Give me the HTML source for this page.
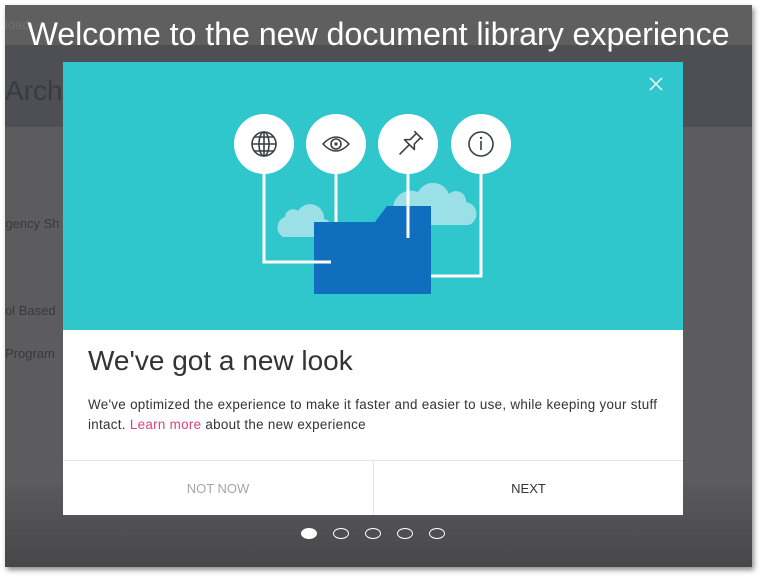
<!DOCTYPE html>
<html><head><meta charset="utf-8"><style>
body{margin:0;width:761px;height:577px;background:#fff;position:relative;overflow:hidden;font-family:"Liberation Sans",sans-serif}
#f{position:absolute;left:5px;top:5px;width:747px;height:562px;background:#5b5a5c;box-shadow:2px 3px 5px rgba(0,0,0,.45);overflow:hidden}
.bg{position:absolute;left:0;width:100%}
.t{position:absolute;color:#3e3e40;font-size:13px;white-space:nowrap}
#h{position:absolute;left:0;top:11px;width:747px;text-align:center;color:#fff;font-size:32.3px;white-space:nowrap;letter-spacing:-0.1px}
#m{position:absolute;left:63px;top:62px;width:620px;height:453px;background:#fff}
#teal{position:absolute;left:0;top:0;width:620px;height:268px;background:#2fc6cc}
.dot{position:absolute;top:528px;width:14px;height:9px;border:1px solid #fff;border-radius:50%}
</style></head><body>
<div id="f">
<div class="bg" style="top:0;height:40px;background:#5f5f5f"></div>
<div class="bg" style="top:40px;height:82px;background:#4e4e55"></div>
<div class="bg" style="top:122px;height:380px;background:#5c5b5d"></div>
<div class="bg" style="top:480px;height:82px;background:linear-gradient(#5a595b,#474649)"></div>
<div class="t" style="left:0;top:12px;color:#707070">load</div>
<div class="t" style="left:0;top:70px;font-size:28px;color:#3a3a40">Archiv</div>
<div class="t" style="left:-4px;top:211px;color:#3a3a3a">rgency Sh</div>
<div class="t" style="left:0;top:298px;color:#3a3a3a">ol Based</div>
<div class="t" style="left:0;top:341px;color:#3a3a3a">Program</div>
<div id="h">Welcome to the new document library experience</div>
</div>
<div id="m">
<div id="teal">
<svg width="620" height="268" viewBox="63 62 620 268" style="position:absolute;left:0;top:0">
<g fill="#9be0e6">
<path d="M283 237h45a10 10 0 0 0-4-18a14 14 0 0 0-26-8a8 8 0 0 0-13 6a11 11 0 0 0-2 20z"/>
<path d="M404 225h65a12 12 0 0 0-3-23a10 10 0 0 0-17-8a17 17 0 0 0-31-2a13 13 0 0 0-14 33z"/>
</g>
<g stroke="#fff" stroke-width="3" fill="none">
<path d="M264 160v102h67"/><path d="M336 160v63"/><path d="M481 160v116h-50"/>
</g>
<path fill="#0f6ebd" d="M314 222h61l12-16h44v88h-117z"/>
<path d="M408 160v78" stroke="#fff" stroke-width="3"/>
<path d="M264 262h67" stroke="#fff" stroke-width="3"/>
<g fill="#fff"><circle cx="264" cy="144" r="30"/><circle cx="336" cy="144" r="30"/><circle cx="408" cy="144" r="30"/><circle cx="481" cy="144" r="30"/></g>
<g stroke="#3a3f44" stroke-width="1.6" fill="none" stroke-linejoin="round">
<circle cx="264" cy="144" r="12"/><ellipse cx="264" cy="144" rx="5" ry="12"/><path d="M252 144h24M254 137h20M254 151h20M264 132v24"/>
<path d="M323 144q13-14 26 0q-13 14-26 0z"/><circle cx="336" cy="144" r="5"/>
<g transform="rotate(45 408 146)"><path d="M402 131h12M405 131v9l-4 4h14l-4-4v-9M408 144v14"/></g>
<circle cx="481" cy="144" r="12"/><path d="M481 141v9"/>
</g>
<circle cx="336" cy="144" r="1.6" fill="#3a3f44"/><circle cx="481" cy="138" r="1.2" fill="#3a3f44"/>
<path d="M650 78l12 12M662 78l-12 12" stroke="#fff" stroke-width="1.4"/>
</svg>
</div>
<div style="position:absolute;left:25px;top:283px;font-size:28px;color:#333">We've got a new look</div>
<div style="position:absolute;left:25px;top:333px;width:580px;font-size:13.4px;letter-spacing:0.3px;line-height:19.5px;color:#333">We've optimized the experience to make it faster and easier to use, while keeping your stuff intact. <span style="color:#d9447b">Learn more</span> about the new experience</div>
<div style="position:absolute;left:0;top:398px;width:620px;border-top:1px solid #e6e6e6"></div>
<div style="position:absolute;left:310px;top:399px;height:54px;border-left:1px solid #e6e6e6"></div>
<div style="position:absolute;left:0;top:419px;width:310px;text-align:center;font-size:13px;color:#a6a6a6">NOT NOW</div>
<div style="position:absolute;left:311px;top:419px;width:309px;text-align:center;font-size:13px;color:#333">NEXT</div>
</div>
<div class="dot" style="left:301px;background:#fff"></div>
<div class="dot" style="left:333px"></div>
<div class="dot" style="left:365px"></div>
<div class="dot" style="left:397px"></div>
<div class="dot" style="left:429px"></div>
</body></html>
